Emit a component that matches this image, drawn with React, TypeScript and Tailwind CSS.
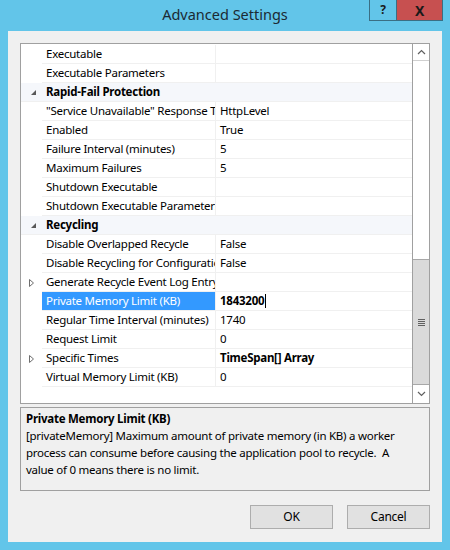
import React from 'react';

type Row =
  | { kind: 'cat'; name: string }
  | { kind: 'prop'; name: string; value?: string; bold?: boolean; expand?: boolean; selected?: boolean };

const ROWS: Row[] = [
  { kind: 'prop', name: 'Executable' },
  { kind: 'prop', name: 'Executable Parameters' },
  { kind: 'cat', name: 'Rapid-Fail Protection' },
  { kind: 'prop', name: '"Service Unavailable" Response Type', value: 'HttpLevel' },
  { kind: 'prop', name: 'Enabled', value: 'True' },
  { kind: 'prop', name: 'Failure Interval (minutes)', value: '5' },
  { kind: 'prop', name: 'Maximum Failures', value: '5' },
  { kind: 'prop', name: 'Shutdown Executable' },
  { kind: 'prop', name: 'Shutdown Executable Parameters' },
  { kind: 'cat', name: 'Recycling' },
  { kind: 'prop', name: 'Disable Overlapped Recycle', value: 'False' },
  { kind: 'prop', name: 'Disable Recycling for Configuration Changes', value: 'False' },
  { kind: 'prop', name: 'Generate Recycle Event Log Entry', expand: true },
  { kind: 'prop', name: 'Private Memory Limit (KB)', value: '1843200', bold: true, selected: true },
  { kind: 'prop', name: 'Regular Time Interval (minutes)', value: '1740' },
  { kind: 'prop', name: 'Request Limit', value: '0' },
  { kind: 'prop', name: 'Specific Times', value: 'TimeSpan[] Array', bold: true, expand: true },
  { kind: 'prop', name: 'Virtual Memory Limit (KB)', value: '0' },
];

function Expanded() {
  return (
    <svg width="7" height="7" viewBox="0 0 7 7">
      <path d="M6 1 L6 6 L1 6 Z" fill="#595959" />
    </svg>
  );
}

function Collapsed() {
  return (
    <svg width="7" height="10" viewBox="0 0 7 10">
      <path d="M1.5 1.5 L5.5 5 L1.5 8.5 Z" fill="none" stroke="#6e6e6e" strokeWidth="1" />
    </svg>
  );
}

function Chevron({ up }: { up?: boolean }) {
  return (
    <svg width="9" height="6" viewBox="0 0 9 6">
      <path d={up ? 'M1 5 L4.5 1.5 L8 5' : 'M1 1 L4.5 4.5 L8 1'} fill="none" stroke="#606060" strokeWidth="1.2" />
    </svg>
  );
}

export default function App() {
  return (
    <div className="w-[450px] h-[550px] bg-[#62c5e9] flex flex-col font-['Segoe_UI','Noto_Sans',sans-serif] text-[11.5px] tracking-[-0.25px] text-black overflow-hidden">
      {/* title bar */}
      <div className="relative h-[31px] shrink-0">
        <div className="absolute inset-x-0 top-[4px] text-center text-[14.5px] tracking-normal text-[#1b2a33]">Advanced Settings</div>
        <div className="absolute top-0 right-[7px] flex">
          <div className="w-[28px] h-[21px] border border-[#3a6e84] border-t-0 flex items-center justify-center text-[12px] font-bold text-[#1a1a1a]">?</div>
          <div className="w-[46px] h-[21px] bg-[#c75050] border border-[#3a6e84] border-t-0 border-l-0 flex items-center justify-center text-[14px] font-bold text-[#1a1a1a]">X</div>
        </div>
      </div>

      {/* client area */}
      <div className="mx-[8px] h-[511px] bg-[#f0f0f0] px-[12px] pt-[12px] flex flex-col">
        {/* property grid */}
        <div className="h-[361px] border border-[#a0a0a0] bg-white flex">
          <div className="flex-1 flex flex-col pt-[1px]">
            {ROWS.map((r, i) =>
              r.kind === 'cat' ? (
                <div key={i} className="h-[19px] flex items-center bg-[#f5f7fb] border-b border-[#f0f0f0]">
                  <div className="w-[21px] flex justify-end pr-[5px]"><Expanded /></div>
                  <div className="pl-[4px] font-bold">{r.name}</div>
                </div>
              ) : (
                <div key={i} className="h-[19px] flex">
                  <div className="w-[21px] flex items-center justify-center">{r.expand && <Collapsed />}</div>
                  <div
                    className={`w-[174px] pl-[4px] border-b border-r border-[#f0f0f0] whitespace-nowrap overflow-hidden leading-[18px] ${
                      r.selected ? 'bg-[#3399ff] text-white' : ''
                    }`}
                  >
                    {r.name}
                  </div>
                  <div className={`flex-1 pl-[4px] border-b border-[#f0f0f0] whitespace-nowrap overflow-hidden leading-[18px] flex items-center ${r.bold ? 'font-bold' : ''}`}>
                    {r.value}
                    {r.selected && <span className="ml-[1px] w-[1px] h-[14px] bg-black" />}
                  </div>
                </div>
              )
            )}
          </div>
          {/* scrollbar */}
          <div className="w-[17px] border-l border-[#a0a0a0] flex flex-col">
            <div className="h-[17px] flex items-center justify-center border-b border-[#d0d0d0]"><Chevron up /></div>
            <div className="h-[198px]" />
            <div className="h-[126px] bg-[#dadada] border-y border-[#a8a8a8] flex flex-col items-center justify-center gap-[1px]">
              <span className="w-[7px] h-[1px] bg-[#606060]" />
              <span className="w-[7px] h-[1px] bg-[#606060]" />
              <span className="w-[7px] h-[1px] bg-[#606060]" />
              <span className="w-[7px] h-[1px] bg-[#606060]" />
            </div>
            <div className="flex-1 flex items-center justify-center"><Chevron /></div>
          </div>
        </div>

        {/* description */}
        <div className="mt-[3px] h-[84px] border border-[#a0a0a0] bg-[#f0f0f0] px-[5px] pt-[2px] leading-[17px] whitespace-nowrap">
          <div className="font-bold">Private Memory Limit (KB)</div>
          <div>[privateMemory] Maximum amount of private memory (in KB) a worker</div>
          <div>process can consume before causing the application pool to recycle.&nbsp; A</div>
          <div>value of 0 means there is no limit.</div>
        </div>

        {/* buttons */}
        <div className="mt-[14px] flex justify-end gap-[14px]">
          <button className="w-[83px] h-[24px] bg-[#e1e1e1] border border-[#adadad] text-[12px]">OK</button>
          <button className="w-[83px] h-[24px] bg-[#e1e1e1] border border-[#adadad] text-[12px]">Cancel</button>
        </div>
      </div>
    </div>
  );
}
